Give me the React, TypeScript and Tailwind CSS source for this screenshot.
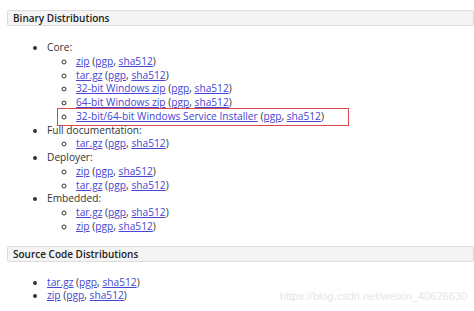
import React from "react";

type Item = { label: string };

const core: Item[] = [
  { label: "zip" },
  { label: "tar.gz" },
  { label: "32-bit Windows zip" },
  { label: "64-bit Windows zip" },
];

function Links({ label }: Item) {
  return (
    <>
      <a className="text-[#4646d4] underline">{label}</a> (
      <a className="text-[#4646d4] underline">pgp</a>,{" "}
      <a className="text-[#4646d4] underline">sha512</a>)
    </>
  );
}

function SubList({ items }: { items: Item[] }) {
  return (
    <ul className="list-[circle] pl-[29px]">
      {items.map((it, i) => (
        <li key={i}>
          <Links label={it.label} />
        </li>
      ))}
    </ul>
  );
}

function Header({ title }: { title: string }) {
  return (
    <div className="ml-[7px] h-[16px] border border-[#dcdcdc] bg-[#f4f4f4] rounded-[2px] pl-[5px] text-[10px] leading-[14px] font-semibold text-[#222]">
      {title}
    </div>
  );
}

export default function App() {
  return (
    <div
      className="relative w-[474px] h-[311px] bg-white overflow-hidden text-[#333] text-[10.2px] leading-[13.75px]"
      style={{ fontFamily: '"Open Sans", "Noto Sans", sans-serif' }}
    >
      <div className="pt-[10px]">
        <Header title="Binary Distributions" />
      </div>

      <ul className="list-disc pl-[47px] mt-[15px]">
        <li>
          Core:
          <SubList items={core} />
          <ul className="list-[circle] pl-[29px]">
            <li className="relative">
              {/* red highlight frame */}
              <span className="absolute -left-[19px] -top-[2px] -bottom-[2px] w-[292px] border border-[#d9484f] pointer-events-none" />
              <Links label="32-bit/64-bit Windows Service Installer" />
            </li>
          </ul>
        </li>
        <li>
          Full documentation:
          <SubList items={[{ label: "tar.gz" }]} />
        </li>
        <li>
          Deployer:
          <SubList items={[{ label: "zip" }, { label: "tar.gz" }]} />
        </li>
        <li>
          Embedded:
          <SubList items={[{ label: "tar.gz" }, { label: "zip" }]} />
        </li>
      </ul>

      <div className="mt-[12px]">
        <Header title="Source Code Distributions" />
      </div>

      <ul className="list-disc pl-[47px] mt-[14px]">
        <li>
          <Links label="tar.gz" />
        </li>
        <li>
          <Links label="zip" />
        </li>
      </ul>

      <div
        className="absolute right-[7px] bottom-[7px] text-[11px] text-[#e6e6e6]"
        style={{ fontFamily: '"Liberation Sans", sans-serif' }}
      >
        https://blog.csdn.net/weixin_40626630
      </div>
    </div>
  );
}
